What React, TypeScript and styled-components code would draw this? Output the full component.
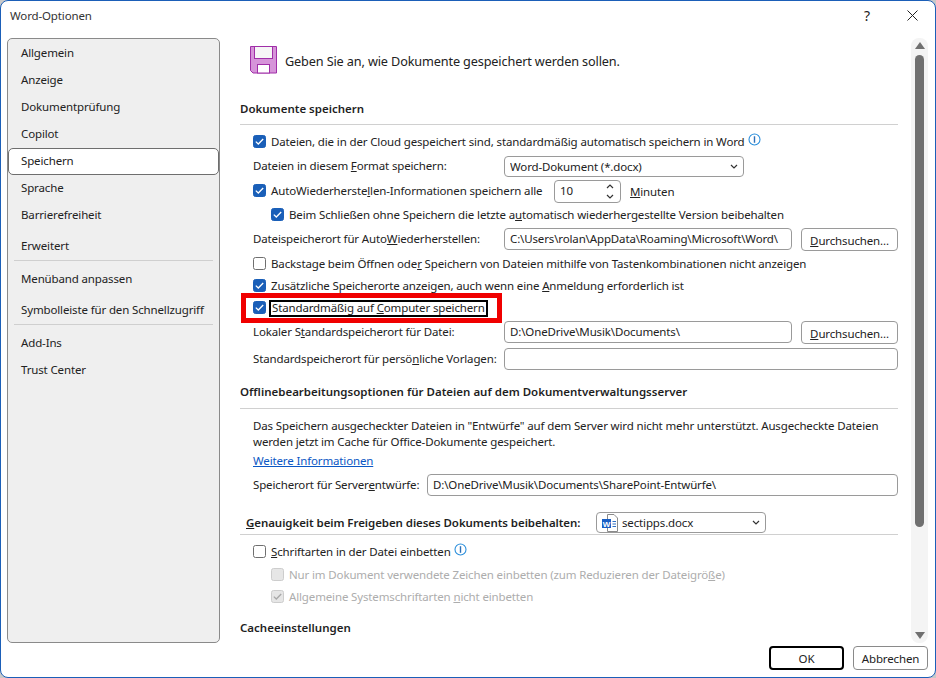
import React from "react";
import styled, { createGlobalStyle } from "styled-components";

const Global = createGlobalStyle`
  html, body {
    margin: 0;
    padding: 0;
    background: #c9c9c9;
  }
  * {
    box-sizing: border-box;
  }
`;

const Window = styled.div`
  width: 936px;
  height: 678px;
  display: flex;
  flex-direction: column;
  background: #fff;
  border: 1px solid #1b5fb8;
  border-radius: 8px;
  overflow: hidden;
  font-family: "Noto Sans", "Open Sans", sans-serif;
  font-size: 11.5px;
  letter-spacing: -0.14px;
  color: #222;
`;

const TitleBar = styled.div`
  height: 37px;
  display: flex;
  align-items: center;
  padding: 0 17px 9px 9px;
  flex-shrink: 0;
`;

const Title = styled.div`
  flex: 1;
  color: #333;
`;

const HelpButton = styled.div`
  width: 12px;
  margin-right: 34px;
  font-size: 14px;
  text-align: center;
  color: #222;
`;

const Body = styled.div`
  flex: 1;
  min-height: 0;
  display: flex;
  padding-right: 7px;
`;

const Sidebar = styled.div`
  width: 213px;
  margin-left: 6px;
  flex-shrink: 0;
  background: #efefef;
  border: 1px solid #8a8a8a;
  border-radius: 5px;
  padding-top: 1px;
`;

const NavItem = styled.div<{ $active?: boolean; $mt?: number }>`
  height: 27px;
  margin: ${(p) => p.$mt ?? 0}px 0 0 0;
  padding: 0 0 3px 12px;
  display: flex;
  align-items: center;
  color: #222;
  background: ${(p) => (p.$active ? "#fff" : "transparent")};
  border: 1px solid ${(p) => (p.$active ? "#6e6e6e" : "transparent")};
  border-radius: 5px;
`;

const NavDivider = styled.div`
  height: 1px;
  margin: 0 6px;
  background: #cfcfcf;
`;

const Pane = styled.div`
  width: 671px;
  margin-left: 20px;
  padding-right: 13px;
  overflow: hidden;
  flex-shrink: 0;
`;

const PageHead = styled.div`
  height: 44px;
  padding: 8px 0 0 10px;
  display: flex;
  align-items: flex-start;
  gap: 7px;
`;

const PageHeadText = styled.div`
  line-height: 28px;
  padding-top: 1px;
  font-size: 12.7px;
  color: #222;
`;

const SectionHead = styled.div<{ $pt: number; $pb: number }>`
  padding: ${(p) => p.$pt}px 0 ${(p) => p.$pb}px;
  line-height: 18px;
  font-weight: 600;
  letter-spacing: 0;
  color: #1f1f1f;
  border-bottom: 1px solid #d0d0d0;
`;

const SectionPlain = styled.div`
  padding-top: 11px;
  line-height: 18px;
  font-weight: 600;
  letter-spacing: 0;
  color: #1f1f1f;
`;

const ShareHead = styled.div`
  height: 35px;
  padding: 12px 0 0 6px;
  display: flex;
  align-items: flex-start;
  border-bottom: 1px solid #d0d0d0;
`;

const ShareLabel = styled.div`
  width: 350px;
  line-height: 21px;
  font-weight: 600;
  letter-spacing: -0.07px;
  color: #1f1f1f;
`;

const Row = styled.div<{ $h: number; $indent?: number; $mt?: number; $dim?: boolean }>`
  position: relative;
  height: ${(p) => p.$h}px;
  margin-top: ${(p) => p.$mt ?? 0}px;
  padding-left: ${(p) => p.$indent ?? 13}px;
  display: flex;
  align-items: center;
  white-space: nowrap;
  color: ${(p) => (p.$dim ? "#adadad" : "#222")};
`;

const Box = styled.span<{ $checked?: boolean; $dim?: boolean }>`
  width: 13px;
  height: 13px;
  margin: 0 5px 2px 0;
  flex-shrink: 0;
  display: flex;
  align-items: center;
  justify-content: center;
  border-radius: 2.5px;
  border: 1px solid
    ${(p) => (p.$dim ? "#cdcdcd" : p.$checked ? "#1a5fb8" : "#6f6f6f")};
  background: ${(p) => (p.$dim ? "#e6e6e6" : p.$checked ? "#1a5fb8" : "#fff")};
`;

const RowText = styled.span`
  padding-bottom: 2px;
`;

const FieldLabel = styled.div<{ $w: number }>`
  width: ${(p) => p.$w}px;
  padding-bottom: 2px;
  flex-shrink: 0;
`;

const Control = styled.div<{ $w: number; $h?: number }>`
  width: ${(p) => p.$w}px;
  height: ${(p) => p.$h ?? 22}px;
  flex-shrink: 0;
  display: flex;
  align-items: center;
  padding: 0 5px;
  background: #fff;
  border: 1px solid #9a9a9a;
  border-radius: 4px;
  overflow: hidden;
  color: #222;
`;

const ControlText = styled.span`
  flex: 1;
  overflow: hidden;
`;

const InputText = styled(ControlText)`
  padding-bottom: 2px;
`;

const Browse = styled.div`
  width: 97px;
  height: 23px;
  margin-left: 9px;
  padding-top: 2px;
  flex-shrink: 0;
  display: flex;
  align-items: center;
  justify-content: center;
  background: #fff;
  border: 1px solid #9a9a9a;
  border-radius: 4px;
  color: #222;
`;

const SpinArrows = styled.div`
  width: 10px;
  display: flex;
  flex-direction: column;
  align-items: center;
  gap: 5px;
`;

const Suffix = styled.div`
  margin-left: 9px;
`;

const InfoWrap = styled.span`
  display: inline-flex;
  margin: -6px 0 0 3px;
`;

const Para = styled.div`
  margin-top: 9px;
  padding-left: 13px;
  line-height: 16px;
  white-space: nowrap;
  color: #222;
`;

const LinkText = styled.span`
  color: #0b57c4;
  text-decoration: underline;
`;

const RedBox = styled.div`
  position: absolute;
  left: 1px;
  top: -2px;
  width: 261px;
  height: 30px;
  border: 5px solid #f00000;
  pointer-events: none;
`;

const FocusLabel = styled.span`
  margin: 1px 0 0 -2px;
  padding: 0 1px;
  height: 17px;
  line-height: 12px;
  border: 2px solid #000;
`;

const Scrollbar = styled.div`
  width: 17px;
  flex-shrink: 0;
  display: flex;
  flex-direction: column;
  align-items: center;
  background: #f4f4f4;
  border-radius: 8px;
  padding: 4px 0;
`;

const Thumb = styled.div`
  width: 9px;
  height: 472px;
  margin-top: 6px;
  background: #707070;
  border-radius: 4.5px;
`;

const ScrollSpacer = styled.div`
  flex: 1;
`;

const Footer = styled.div`
  height: 34px;
  flex-shrink: 0;
  padding: 3px 7px 0 0;
  display: flex;
  justify-content: flex-end;
  gap: 9px;
`;

const DialogButton = styled.div<{ $primary?: boolean }>`
  width: 75px;
  height: 24px;
  display: flex;
  align-items: center;
  justify-content: center;
  background: #fff;
  border: ${(p) => (p.$primary ? "2px solid #000" : "1px solid #8a8a8a")};
  border-radius: 4px;
  color: #222;
`;

const Check = ({ color = "#fff" }: { color?: string }) => (
  <svg width="9" height="7" viewBox="0 0 9 7">
    <path d="M0.8 3.6 L3.3 6 L8.2 1" fill="none" stroke={color} strokeWidth="1.3" />
  </svg>
);

const Chevron = ({ up }: { up?: boolean }) => (
  <svg width="8" height="5" viewBox="0 0 8 5">
    <path
      d={up ? "M1 4 L4 1 L7 4" : "M1 1 L4 4 L7 1"}
      fill="none"
      stroke="#333"
      strokeWidth="1.2"
    />
  </svg>
);

const Info = () => (
  <svg width="13" height="13" viewBox="0 0 13 13">
    <circle cx="6.5" cy="6.5" r="5.5" fill="#fff" stroke="#2b8fdc" strokeWidth="1.1" />
    <path d="M6.5 3.2 V9.8" stroke="#2b6fb8" strokeWidth="1.4" />
  </svg>
);

const SaveIcon = () => (
  <svg width="28" height="28" viewBox="0 0 28 28">
    <path d="M0.5 0.5 H26.5 V27 H3 L0.5 24.5 Z" fill="#d694d9" stroke="#a02fa8" />
    <rect x="4.5" y="0.5" width="18" height="12" fill="#f6f6f6" stroke="#a02fa8" />
    <rect x="7.5" y="18.5" width="12" height="8.5" fill="#fff" stroke="#a02fa8" />
  </svg>
);

const WordIcon = () => (
  <svg width="16" height="18" viewBox="0 0 16 18" style={{ marginRight: 4, flexShrink: 0 }}>
    <path d="M5.5 0.5 H12 L15.5 4 V17.5 H5.5 Z" fill="#fff" stroke="#8a8a8a" />
    <path d="M10.5 7.5 H14 M10.5 10 H14 M10.5 12.5 H14" stroke="#2f6fc4" />
    <rect x="0" y="5" width="9" height="9" fill="#1a5fc4" />
    <text x="4.5" y="12.5" fontSize="8" fontWeight="700" fill="#fff" textAnchor="middle" fontFamily="Liberation Sans">
      W
    </text>
  </svg>
);

const ArrowUp = () => (
  <svg width="10" height="7" viewBox="0 0 10 7">
    <path d="M5 0 L10 7 H0 Z" fill="#707070" />
  </svg>
);

const ArrowDown = () => (
  <svg width="10" height="7" viewBox="0 0 10 7">
    <path d="M0 0 H10 L5 7 Z" fill="#707070" />
  </svg>
);

const CloseIcon = () => (
  <svg width="11" height="11" viewBox="0 0 11 11">
    <path d="M0.5 0.5 L10.5 10.5 M10.5 0.5 L0.5 10.5" stroke="#222" strokeWidth="1" />
  </svg>
);

export default function App() {
  return (
    <>
      <Global />
      <Window>
        <TitleBar>
          <Title>Word-Optionen</Title>
          <HelpButton>?</HelpButton>
          <CloseIcon />
        </TitleBar>
        <Body>
          <Sidebar>
            <NavItem>Allgemein</NavItem>
            <NavItem>Anzeige</NavItem>
            <NavItem>Dokumentprüfung</NavItem>
            <NavItem>Copilot</NavItem>
            <NavItem $active>Speichern</NavItem>
            <NavItem>Sprache</NavItem>
            <NavItem>Barrierefreiheit</NavItem>
            <NavItem $mt={4}>Erweitert</NavItem>
            <NavDivider />
            <NavItem $mt={5}>Menüband anpassen</NavItem>
            <NavItem $mt={4}>Symbolleiste für den Schnellzugriff</NavItem>
            <NavDivider />
            <NavItem $mt={5}>Add-Ins</NavItem>
            <NavItem>Trust Center</NavItem>
          </Sidebar>
          <Pane>
            <PageHead>
              <SaveIcon />
              <PageHeadText>Geben Sie an, wie Dokumente gespeichert werden sollen.</PageHeadText>
            </PageHead>
            <SectionHead $pt={18} $pb={6}>Dokumente speichern</SectionHead>

            <Row $h={24} $mt={5}>
              <Box $checked><Check /></Box>
              <RowText>Dateien, die in der Cloud gespeichert sind, standardmäßig automatisch speichern in Word</RowText>
              <InfoWrap><Info /></InfoWrap>
            </Row>
            <Row $h={25}>
              <FieldLabel $w={251}>Dateien in diesem <u>F</u>ormat speichern:</FieldLabel>
              <Control $w={240} $h={21}>
                <ControlText>Word-Dokument (*.docx)</ControlText>
                <Chevron />
              </Control>
            </Row>
            <Row $h={24}>
              <Box $checked><Check /></Box>
              <FieldLabel $w={283}>AutoWiederherste<u>l</u>len-Informationen speichern alle</FieldLabel>
              <Control $w={67} $h={23}>
                <InputText>10</InputText>
                <SpinArrows>
                  <Chevron up />
                  <Chevron />
                </SpinArrows>
              </Control>
              <Suffix><u>M</u>inuten</Suffix>
            </Row>
            <Row $h={24} $indent={31}>
              <Box $checked><Check /></Box>
              <RowText>Beim Schließen ohne Speichern die letzte a<u>u</u>tomatisch wiederhergestellte Version beibehalten</RowText>
            </Row>
            <Row $h={24}>
              <FieldLabel $w={251}>Dateispeicherort für Auto<u>W</u>iederherstellen:</FieldLabel>
              <Control $w={288}><InputText>C:\Users\rolan\AppData\Roaming\Microsoft\Word\</InputText></Control>
              <Browse><span><u>D</u>urchsuchen...</span></Browse>
            </Row>
            <Row $h={26}>
              <Box />
              <RowText>Backstage beim Öffnen ode<u>r</u> Speichern von Dateien mithilfe von Tastenkombinationen nicht anzeigen</RowText>
            </Row>
            <Row $h={18}>
              <Box $checked><Check /></Box>
              <RowText>Zusätzliche Speicherorte anzeigen, auch wenn eine <u>A</u>nmeldung erforderlich ist</RowText>
            </Row>
            <Row $h={26}>
              <Box $checked><Check /></Box>
              <FocusLabel>Standardmäßig auf <u>C</u>omputer speichern</FocusLabel>
              <RedBox />
            </Row>
            <Row $h={22}>
              <FieldLabel $w={251}>Lokaler S<u>t</u>andardspeicherort für Datei:</FieldLabel>
              <Control $w={288}><InputText>D:\OneDrive\Musik\Documents\</InputText></Control>
              <Browse><span><u>D</u>urchsuchen...</span></Browse>
            </Row>
            <Row $h={32}>
              <FieldLabel $w={251}>Standardspeicherort für persö<u>n</u>liche Vorlagen:</FieldLabel>
              <Control $w={394} />
            </Row>

            <SectionHead $pt={8} $pb={7}>Offlinebearbeitungsoptionen für Dateien auf dem Dokumentverwaltungsserver</SectionHead>
            <Para>
              Das Speichern ausgecheckter Dateien in "Entwürfe" auf dem Server wird nicht mehr unterstützt. Ausgecheckte Dateien
              <br />
              werden jetzt im Cache für Office-Dokumente gespeichert.
            </Para>
            <Row $h={20}><LinkText>Weitere Informationen</LinkText></Row>
            <Row $h={30}>
              <FieldLabel $w={174}>Speicherort für Server<u>e</u>ntwürfe:</FieldLabel>
              <Control $w={471}><InputText>D:\OneDrive\Musik\Documents\SharePoint-Entwürfe\</InputText></Control>
            </Row>

            <ShareHead>
              <ShareLabel><u>G</u>enauigkeit beim Freigeben dieses Dokuments beibehalten:</ShareLabel>
              <Control $w={170} $h={21}>
                <WordIcon />
                <ControlText>sectipps.docx</ControlText>
                <Chevron />
              </Control>
            </ShareHead>
            <Row $h={23} $mt={6}>
              <Box />
              <RowText><u>S</u>chriftarten in der Datei einbetten</RowText>
              <InfoWrap><Info /></InfoWrap>
            </Row>
            <Row $h={22} $indent={31} $dim>
              <Box $dim />
              <RowText>Nur im Dokument verwendete Zeichen einbetten (zum Reduzieren der Dateigrö<u>ß</u>e)</RowText>
            </Row>
            <Row $h={22} $indent={31} $dim>
              <Box $dim $checked><Check color="#a8a8a8" /></Box>
              <RowText>Allgemeine Systemschriftarten <u>n</u>icht einbetten</RowText>
            </Row>
            <SectionPlain>Cacheeinstellungen</SectionPlain>
          </Pane>
          <Scrollbar>
            <ArrowUp />
            <Thumb />
            <ScrollSpacer />
            <ArrowDown />
          </Scrollbar>
        </Body>
        <Footer>
          <DialogButton $primary>OK</DialogButton>
          <DialogButton>Abbrechen</DialogButton>
        </Footer>
      </Window>
    </>
  );
}
